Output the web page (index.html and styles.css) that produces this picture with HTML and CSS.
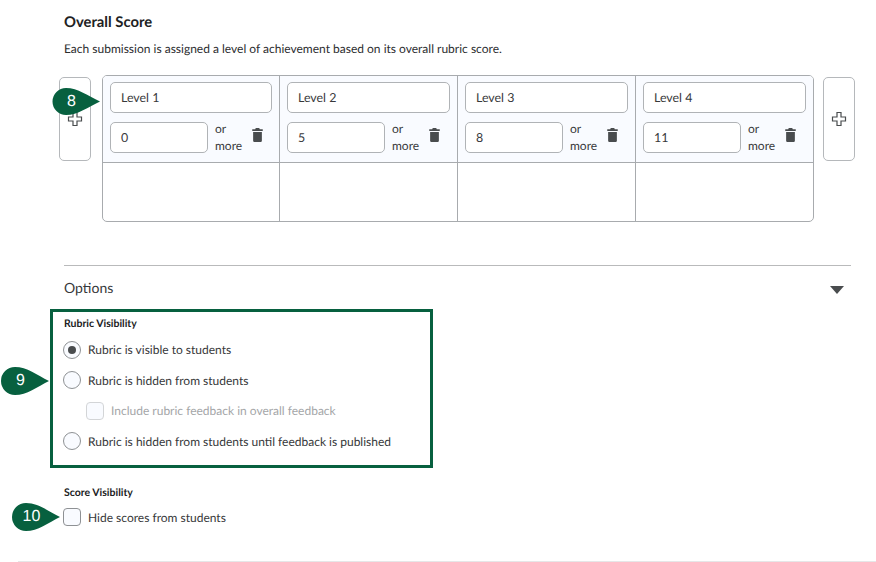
FILE: index.html
```html
<!DOCTYPE html>
<html lang="en">
<head>
<meta charset="utf-8">
<title>Overall Score</title>
<link rel="stylesheet" href="styles.css">
</head>
<body>
<main class="page">
  <h2 class="title">Overall Score</h2>
  <p class="desc">Each submission is assigned a level of achievement based on its overall rubric score.</p>

  <div class="editor">
    <button class="add" type="button" aria-label="Add level">
      <svg class="plus" viewBox="0 0 16 16"><path d="M6 1.500h4v4.500h4.500v4H10v4.500H6V10H1.500V6H6z"/></svg>
    </button>
    <div class="table">
      <div class="head">
        <div class="cell">
          <div class="input name">Level 1</div>
          <div class="row"><div class="input num">0</div><span class="more">or<br>more</span>
            <svg class="trash" viewBox="0 0 12 16"><path d="M4 0h4l.6 1.500H12V3.500H0V1.500h3.400zM1 4.500h10V14.500a1.500 1.500 0 0 1-1.500 1.500h-7A1.500 1.500 0 0 1 1 14.500z"/></svg></div>
        </div>
        <div class="cell">
          <div class="input name">Level 2</div>
          <div class="row"><div class="input num">5</div><span class="more">or<br>more</span>
            <svg class="trash" viewBox="0 0 12 16"><path d="M4 0h4l.6 1.500H12V3.500H0V1.500h3.400zM1 4.500h10V14.500a1.500 1.500 0 0 1-1.500 1.500h-7A1.500 1.500 0 0 1 1 14.500z"/></svg></div>
        </div>
        <div class="cell">
          <div class="input name">Level 3</div>
          <div class="row"><div class="input num">8</div><span class="more">or<br>more</span>
            <svg class="trash" viewBox="0 0 12 16"><path d="M4 0h4l.6 1.500H12V3.500H0V1.500h3.400zM1 4.500h10V14.500a1.500 1.500 0 0 1-1.500 1.500h-7A1.500 1.500 0 0 1 1 14.500z"/></svg></div>
        </div>
        <div class="cell">
          <div class="input name">Level 4</div>
          <div class="row"><div class="input num">11</div><span class="more">or<br>more</span>
            <svg class="trash" viewBox="0 0 12 16"><path d="M4 0h4l.6 1.500H12V3.500H0V1.500h3.400zM1 4.500h10V14.500a1.500 1.500 0 0 1-1.500 1.500h-7A1.500 1.500 0 0 1 1 14.500z"/></svg></div>
        </div>
      </div>
      <div class="body">
        <div class="blank"></div><div class="blank"></div><div class="blank"></div><div class="blank"></div>
      </div>
    </div>
    <button class="add" type="button" aria-label="Add level">
      <svg class="plus" viewBox="0 0 16 16"><path d="M6 1.500h4v4.500h4.500v4H10v4.500H6V10H1.500V6H6z"/></svg>
    </button>

    <div class="badge badge-8">
      <svg viewBox="0 0 48 27"><path d="M14 0C26 0 36 8 48 13.500 36 19 26 27 14 27A13.500 13.500 0 0 1 14 0z"/></svg>
      <span>8</span>
    </div>
  </div>

  <section class="options">
    <div class="options-head">
      <span>Options</span>
      <svg class="caret" viewBox="0 0 14 8"><path d="M0 0h14L7 8z"/></svg>
    </div>
  </section>

  <div class="vis-box">
    <div class="label">Rubric Visibility</div>
    <div class="option first"><span class="radio on"></span>Rubric is visible to students</div>
    <div class="option"><span class="radio"></span>Rubric is hidden from students</div>
    <div class="option sub"><span class="check off"></span>Include rubric feedback in overall feedback</div>
    <div class="option"><span class="radio"></span>Rubric is hidden from students until feedback is published</div>
    <div class="badge badge-9">
      <svg viewBox="0 0 48 28"><path d="M14 0C26 0 36 8 48 14 36 20 26 28 14 28A14 14 0 0 1 14 0z"/></svg>
      <span>9</span>
    </div>
  </div>

  <div class="score">
    <div class="label">Score Visibility</div>
    <div class="option first"><span class="check"></span>Hide scores from students</div>
    <div class="badge badge-10">
      <svg viewBox="0 0 48 28"><path d="M14 0C26 0 36 8 48 14 36 20 26 28 14 28A14 14 0 0 1 14 0z"/></svg>
      <span>10</span>
    </div>
  </div>
  <div class="footer-line"></div>
</main>
</body>
</html>
```
FILE: styles.css
```css
* { box-sizing: border-box; }
html, body { margin: 0; height: 100%; overflow: hidden; background: #fff; }
body { font-family: Lato, "Noto Sans", sans-serif; color: #202122; text-rendering: geometricPrecision; }
.page { width: 876px; height: 562px; padding: 14px 0 0 0; }
.title { margin: 0 0 0 64px; font-size: 14.800px; line-height: 16px; font-weight: 700; }
.desc { margin: 10px 0 0 64px; font-size: 12px; line-height: 18px; color: #2c2d2f; }

.editor { position: relative; display: flex; align-items: flex-start; margin: 17px 0 0 59px; width: 796px; }
.add { flex: none; width: 32px; height: 84px; margin-top: 2px; padding: 0; background: #fff; border: 1px solid #b5b8bb; border-radius: 5px; display: flex; align-items: center; justify-content: center; }
.plus { width: 16px; height: 16px; fill: #fff; stroke: #494c4e; stroke-width: 1.200; }
.table { flex: none; width: 712px; margin: 0 9px 0 11px; border: 1px solid #a8abae; border-radius: 5px; overflow: hidden; }
.head { display: grid; grid-template-columns: 176px 178px 178px 1fr; height: 87px; background: #f9fbff; border-bottom: 1px solid #a8abae; }
.cell { padding: 6px 7px 0 7px; border-left: 1px solid #a8abae; }
.cell:first-child { border-left: 0; }
.input { background: #fff; border: 1px solid #b0b3b6; border-radius: 5px; font-size: 12.400px; color: #37383a; display: flex; align-items: center; }
.name { height: 31px; padding-left: 10px; }
.row { display: flex; align-items: center; margin-top: 7px; }
.num { width: 98px; height: 31px; padding-left: 10px; flex: none; }
.more { font-size: 12px; line-height: 17px; margin-left: 7px; width: 34px; color: #37383a; }
.trash { width: 11px; height: 14px; fill: #494c4e; margin-left: 3px; margin-bottom: 4px; }
.body { display: grid; grid-template-columns: 176px 178px 178px 1fr; height: 58px; }
.blank { border-left: 1px solid #a8abae; }
.blank:first-child { border-left: 0; }

.badge { position: absolute; color: #fff; }
.badge svg { display: block; width: 100%; height: 100%; fill: #07603f; }
.badge span { position: absolute; top: 0; bottom: 0; left: 0; width: 39px; display: flex; align-items: center; justify-content: center; font: 16px "Liberation Sans", Arial, sans-serif; }
.badge-8 { left: -7px; top: 13px; width: 48px; height: 27px; }
.badge-9 { left: -52px; top: 55px; width: 48px; height: 28px; }
.badge-10 { left: -52px; top: 17px; width: 48px; height: 28px; }

.options { margin: 43px 25px 1px 64px; border-top: 1px solid #b9babb; }
.options-head { display: flex; align-items: center; justify-content: space-between; height: 42px; font-size: 14px; color: #37383a; padding: 0 7px 0 0; }
.caret { width: 14px; height: 8px; fill: #494c4e; margin-top: 5px; }

.vis-box { position: relative; width: 383px; height: 159px; margin: 0 0 0 50px; padding: 5px 0 0 11px; border: 3px solid #07603f; }
.label { font-size: 10.500px; line-height: 14px; font-weight: 700; color: #202122; }
.option { display: flex; align-items: center; gap: 7px; height: 18px; font-size: 12px; color: #37383a; white-space: nowrap; }
.option.first { margin-top: 9.500px; }
.sub { margin-left: 22px; color: #a4a6a8; }
.vis-box .option + .option { margin-top: 12.500px; }
.radio { flex: none; width: 18px; height: 18px; border-radius: 50%; border: 1px solid #8e9194; background: #f9fbff; display: flex; align-items: center; justify-content: center; }
.radio.on::after { content: ""; width: 8px; height: 8px; border-radius: 50%; background: #494c4e; }
.check { flex: none; width: 18px; height: 18px; border-radius: 4px; border: 1px solid #8e9194; background: #f9fbff; }
.check.off { border-color: #d3d5d7; }

.score { position: relative; margin: 18px 0 0 64px; }
.score .option.first { margin-top: 8px; margin-left: -1px; }
.vis-box .radio { margin-left: -1px; }
.footer-line { margin: 35px 0 0 18px; height: 1px; background: #e6e7e8; }
```
